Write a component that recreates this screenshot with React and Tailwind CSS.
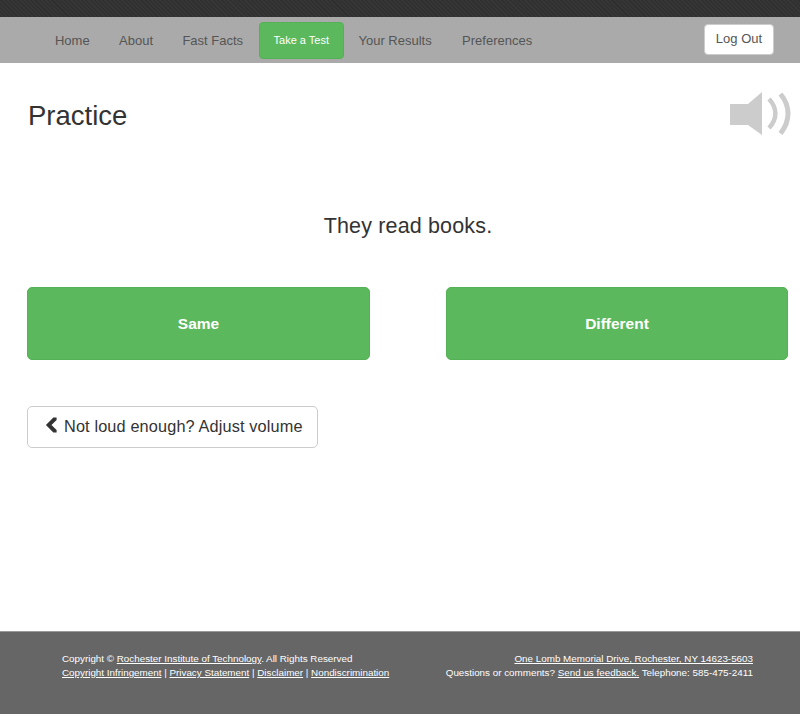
import React from "react";

const navBefore = ["Home", "About", "Fast Facts"];
const navAfter = ["Your Results", "Preferences"];

function NavLink({ children }) {
  return <a className="text-[13px] leading-[20px] text-[#555] px-[14.7px] mt-[1px]">{children}</a>;
}

export default function App() {
  return (
    <div className="w-[800px] h-[714px] flex flex-col bg-white overflow-hidden text-[#333]" style={{ fontFamily: '"Liberation Sans", Arial, sans-serif' }}>
      <div className="h-[17px] shrink-0 bg-[#333333] bg-[repeating-linear-gradient(45deg,#303030_0px,#303030_1.500px,#363636_1.500px,#363636_3px)]" />
      <nav className="h-[46px] shrink-0 bg-[#aaaaaa] flex items-center pl-[40.3px] pr-[26px]">
        {navBefore.map((n) => <NavLink key={n}>{n}</NavLink>)}
        <a className="h-[37px] w-[85px] ml-[1px] flex items-center justify-center bg-[#5cb85c] border border-[#55b155] rounded-[4px] text-white text-[11px] pt-[1px]">Take a Test</a>
        <div className="flex gap-[1px]">
          {navAfter.map((n) => <NavLink key={n}>{n}</NavLink>)}
        </div>
        <a className="ml-auto h-[31px] w-[70px] mb-[2px] flex items-center justify-center bg-white border border-[#cccccc] rounded-[4px] text-[#555] text-[13px]">Log Out</a>
      </nav>
      <main className="flex-1 flex flex-col pl-[27px] pr-[12px]">
        <div className="flex justify-between items-start pt-[29px]">
          <h1 className="text-[27.500px] leading-[46px] font-normal pl-[1px] mt-[1px]">Practice</h1>
          <svg viewBox="0 0 62 46" className="w-[62px] h-[46px] -mr-[4px]" fill="none">
            <path d="M0 12h18L32 0v43L18 33H0z" fill="#cccccc" />
            <path d="M39 7C47.500 16 47.500 27 39 36" stroke="#cccccc" strokeWidth="4.500" />
            <path d="M50.500 2C60.500 14 60.500 29 50.500 41.500" stroke="#cccccc" strokeWidth="5" />
          </svg>
        </div>
        <p className="mt-[72px] text-center text-[21.500px] leading-[30px] tracking-[0.15px] pl-[1px]">They read books.</p>
        <div className="mt-[46px] flex justify-between">
          <button className="w-[343px] h-[73px] bg-[#5cb85c] border border-[#55b155] rounded-[5px] text-white text-[15.500px] font-bold pt-[1px]">Same</button>
          <button className="w-[342px] h-[73px] bg-[#5cb85c] border border-[#55b155] rounded-[5px] text-white text-[15.500px] font-bold pt-[1px]">Different</button>
        </div>
        <button className="mt-[46px] w-[291px] h-[42px] bg-white border border-[#cccccc] rounded-[5px] flex items-center pl-[17px] text-[16.300px] tracking-[0.14px] pb-[1px]">
          <svg viewBox="0 0 14 16" className="w-[13px] h-[16px] mr-[6px] mb-[3px]">
            <path d="M9 0 1 8l8 8h3.500v-2.500L7 8l5.500-5.500V0z" fill="#333" />
          </svg>
          Not loud enough? Adjust volume
        </button>
      </main>
      <footer className="h-[83px] shrink-0 bg-[#666666] border-t border-[#999999] flex justify-between pl-[62px] pr-[47px] pt-[20px] text-[9.830px] leading-[14px] text-white">
        <div>
          <div>Copyright © <a className="underline">Rochester Institute of Technology</a>. All Rights Reserved</div>
          <div><a className="underline">Copyright Infringement</a> | <a className="underline">Privacy Statement</a> | <a className="underline">Disclaimer</a> | <a className="underline">Nondiscrimination</a></div>
        </div>
        <div className="text-right">
          <div><a className="underline">One Lomb Memorial Drive, Rochester, NY 14623-5603</a></div>
          <div>Questions or comments? <a className="underline">Send us feedback.</a> Telephone: 585-475-2411</div>
        </div>
      </footer>
    </div>
  );
}
